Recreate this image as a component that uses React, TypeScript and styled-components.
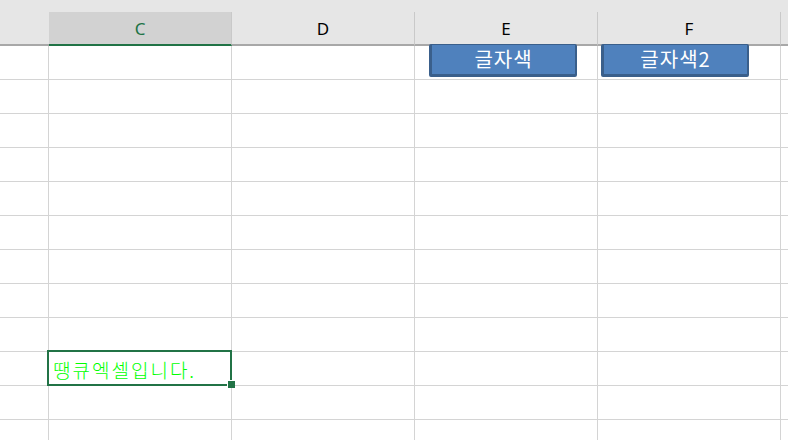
import React from 'react';
import styled, { createGlobalStyle } from 'styled-components';

const GlobalStyle = createGlobalStyle`
  html, body {
    margin: 0;
    padding: 0;
    background: #ffffff;
    overflow: hidden;
  }
  body {
    font-family: "Noto Sans", "Noto Sans CJK KR", sans-serif;
  }
`;

const COLS = '49px 183px 183px 183px 183px 1fr';

const Sheet = styled.div`
  width: 788px;
  height: 440px;
  overflow: hidden;
  position: relative;
  background: #ffffff;
`;

const HeaderRow = styled.div`
  display: grid;
  grid-template-columns: ${COLS};
  height: 46px;
  background: #e6e6e6;
`;

const HeaderCell = styled.div<{ $active?: boolean; $last?: boolean }>`
  display: flex;
  align-items: center;
  justify-content: center;
  margin-top: 12px;
  box-sizing: border-box;
  border-right: ${(p) => (p.$last ? '0' : '1px solid #c9c9c9')};
  border-bottom: 2px solid ${(p) => (p.$active ? '#217346' : '#a8a8a8')};
  background: ${(p) => (p.$active ? '#d2d2d2' : 'transparent')};
  color: ${(p) => (p.$active ? '#217346' : '#000000')};
  font-size: 17px;
  padding-top: 1px;
`;

const Corner = styled.div`
  box-sizing: border-box;
  border-bottom: 2px solid #a8a8a8;
`;

const Row = styled.div`
  display: grid;
  grid-template-columns: ${COLS};
  height: 34px;
`;

const Cell = styled.div<{ $last?: boolean; $selected?: boolean }>`
  position: relative;
  z-index: ${(p) => (p.$selected ? 2 : 'auto')};
  box-sizing: border-box;
  border-right: ${(p) => (p.$last ? '0' : '1px solid #d4d4d4')};
  border-bottom: 1px solid #d4d4d4;
  display: flex;
  align-items: center;
`;

const Selection = styled.div`
  position: absolute;
  left: -2px;
  top: -2px;
  right: -1px;
  bottom: -1px;
  border: 2px solid #217346;
  pointer-events: none;
`;

const FillHandle = styled.div`
  position: absolute;
  right: -4px;
  bottom: -3px;
  width: 7px;
  height: 7px;
  background: #217346;
  border-left: 1px solid #ffffff;
  border-top: 1px solid #ffffff;
`;

const GreenText = styled.span`
  font-family: "Noto Sans CJK KR", sans-serif;
  font-size: 19px;
  letter-spacing: 2px;
  color: #00ff00;
  padding-left: 4px;
  padding-top: 1px;
  font-weight: 300;
`;

const ShapeButton = styled.div<{ $left: number }>`
  position: absolute;
  top: 44px;
  left: ${(p) => p.$left}px;
  width: 148px;
  height: 33px;
  box-sizing: border-box;
  background: #4f81bd;
  border: 3px solid #3a5f8b;
  border-top-width: 1px;
  border-right-width: 2px;
  border-radius: 2px;
  display: flex;
  align-items: center;
  justify-content: center;
  color: #ffffff;
  font-family: "Noto Sans CJK KR", sans-serif;
  font-size: 20px;
  letter-spacing: 1px;
  padding-bottom: 2px;
`;

const columns = ['', 'C', 'D', 'E', 'F', ''];
const rowCount = 12;

export default function App() {
  return (
    <Sheet>
      <GlobalStyle />
      <HeaderRow>
        <Corner />
        {columns.slice(1).map((c, i) => (
          <HeaderCell key={i} $active={c === 'C'} $last={i === columns.length - 2}>
            {c}
          </HeaderCell>
        ))}
      </HeaderRow>
      {Array.from({ length: rowCount }).map((_, r) => (
        <Row key={r}>
          {columns.map((_c, ci) => {
            const selected = r === 9 && ci === 1;
            return (
              <Cell key={ci} $last={ci === columns.length - 1} $selected={selected}>
                {selected && (
                  <>
                    <GreenText>땡큐엑셀입니다.</GreenText>
                    <Selection />
                    <FillHandle />
                  </>
                )}
              </Cell>
            );
          })}
        </Row>
      ))}
      <ShapeButton $left={429}>글자색</ShapeButton>
      <ShapeButton $left={601}>글자색2</ShapeButton>
    </Sheet>
  );
}
